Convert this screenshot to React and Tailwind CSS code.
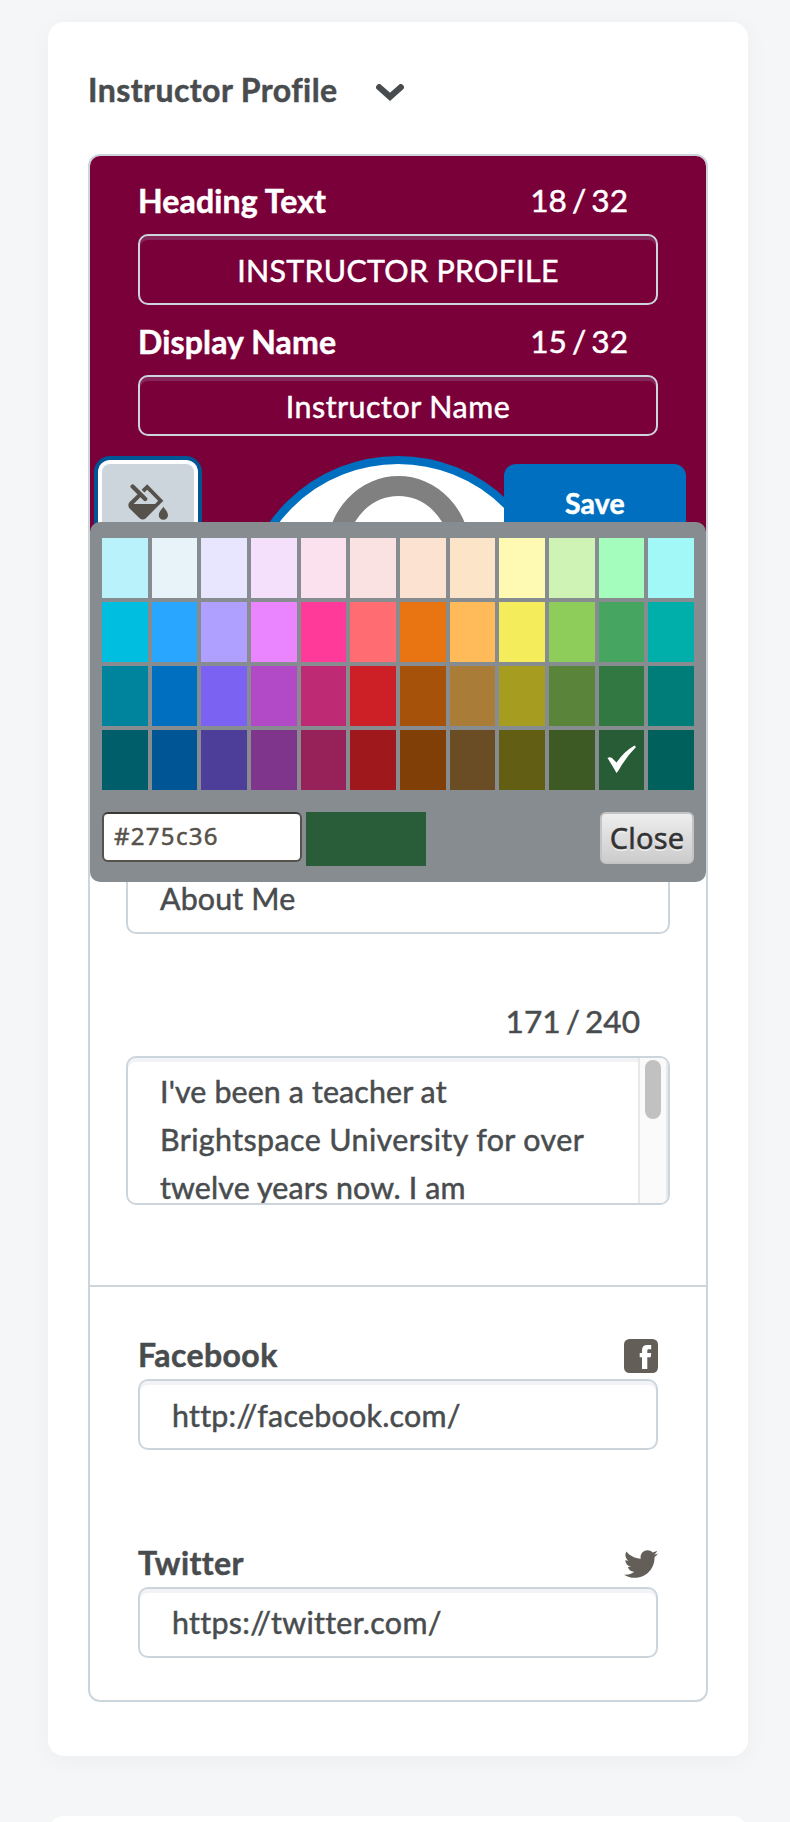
import { FaTwitter } from 'react-icons/fa';

const SWATCHES = [
  '#baf2fc', '#e8f3f9', '#e8e5ff', '#f4e0fa', '#fbe0ee', '#fae2e3', '#fce2d0', '#fce4c8', '#fffab3', '#cff3b4', '#a5fdbd', '#a1f8f6',
  '#00bedf', '#29a6ff', '#af9fff', '#eb85ff', '#ff3a99', '#ff6c72', '#e87511', '#ffba59', '#f4ec5b', '#8ecd5a', '#46a661', '#00aeaa',
  '#00839c', '#006fbf', '#7b62f2', '#b24ac7', '#be2a73', '#cd2026', '#a6520b', '#a97d38', '#a59c20', '#59843a', '#317843', '#007d78',
  '#005d6a', '#005694', '#4d3f99', '#7e358b', '#972159', '#9f181c', '#813f08', '#6a4c25', '#625f14', '#3d5a25', '#275c36', '#00605c',
];

const SELECTED = '#275c36';

function Field({ children, className = '' }) {
  return (
    <div
      className={`flex items-center whitespace-nowrap rounded-[10px] border-2 border-[#cdd5dc] text-[30.4px] ${className}`}
    >
      {children}
    </div>
  );
}

function Label({ text, children, className = '' }) {
  return (
    <div className={`flex h-10 items-center justify-between text-[32px] ${className}`}>
      <span className="font-bold">{text}</span>
      {children}
    </div>
  );
}

function Counter({ used, max }) {
  return (
    <span className="mr-[30px] text-[31.6px] tracking-normal [word-spacing:-3px]">
      {used} / {max}
    </span>
  );
}

function BucketIcon() {
  return (
    <svg viewBox="0 0 121 108" className="h-9 w-10" fill="#56524b">
      <path
        fillRule="evenodd"
        d="M58 0L107 50L54 103Q45 111 35 103L5 74Q-3 63 5 54L33 27L41 36L17 60L82 60L91 50L58 17L50 25L41 17Z"
      />
      <path d="M14 7L52 45" stroke="#56524b" strokeWidth="13" strokeLinecap="round" />
      <path d="M107 68C113 77 121 85 121 94A14 14 0 0 1 93 94C93 85 101 77 107 68Z" />
    </svg>
  );
}

function FacebookIcon() {
  return (
    <svg viewBox="0 0 34 34" className="mt-0.5 size-[34px]">
      <rect width="34" height="34" rx="5.5" fill="#635e57" />
      <path
        fill="#fff"
        d="M18 30V18.3h-2.3v-4.2H18v-2.6C18 7.800 19.900 6 23.200 6h4v4.200h-2.300c-1.300 0-1.600.6-1.600 1.700v2.200h3.900l-.5 4.200h-3.400V30z"
      />
    </svg>
  );
}

function ColorPicker() {
  return (
    <div className="absolute left-0 top-[366px] h-[360px] w-[616px] rounded-[10px] bg-[#868c8f] px-3 pt-4">
      <div className="grid grid-cols-12 gap-1">
        {SWATCHES.map((color) => (
          <div key={color} className="h-[60px] pl-2 pt-[15px]" style={{ backgroundColor: color }}>
            {color === SELECTED && (
              <svg viewBox="0 0 30 30" className="size-[30px]" fill="#fff">
                <path d="M0.500 13Q2.500 11.500 5 13L9.500 17.500Q17 6.500 27.500 0.500L29 2Q19 12 11.500 25.500L9.500 28Q5 20 0.500 13Z" />
              </svg>
            )}
          </div>
        ))}
      </div>
      <div className="mt-[22px] flex items-start">
        <div className="flex h-[50px] w-[200px] items-center rounded-md border-2 border-[#56524b] border-t-[#3a3835] bg-white pb-0.5 pl-[10px] font-['Noto_Sans',sans-serif] text-[24px] tracking-[1.3px] text-[#565149]">
          {SELECTED}
        </div>
        <div className="ml-1 h-[54px] w-[120px] bg-[#295c38]" />
        <button className="ml-auto flex h-[52px] w-[94px] items-center justify-center rounded-md border-2 border-[#c4c4c4] bg-linear-to-b from-[#eeeeee] to-[#cccccc] pb-px font-['Noto_Sans',sans-serif] text-[29px] tracking-[0.2px] text-[#333] [text-shadow:0_2px_0_#eee]">
          Close
        </button>
      </div>
    </div>
  );
}

function App() {
  return (
    <div className="h-[1822px] overflow-hidden bg-[#f5f6f8] pl-12 pr-[42px] pt-[22px] font-[Lato,sans-serif] text-[#494c4e] [-webkit-text-stroke:0.5px]">
      <div className="h-[1734px] rounded-2xl bg-white px-10 shadow-[0_4px_24px_rgba(0,0,0,0.04)]">
        <div className="flex h-[132px] items-center pt-1">
          <h2 className="text-[32px] font-bold tracking-[0.45px]">Instructor Profile</h2>
          <svg
            viewBox="0 0 28 17"
            className="ml-[38px] mt-1 h-[17px] w-7"
            fill="none"
            stroke="#494c4e"
            strokeWidth="6.2"
            strokeLinecap="round"
          >
            <path d="M3.200 3.200L14 12.800L24.800 3.200" />
          </svg>
        </div>

        <div className="relative h-[1548px] rounded-xl border-2 border-[#cdd5dc]">
          <div className="h-[640px] overflow-hidden rounded-t-[10px] bg-[#7a0039] text-white">
            <div className="px-12 pt-[25px]">
              <Label text="Heading Text" className="tracking-[0.15px]">
                <Counter used={18} max={32} />
              </Label>
              <Field className="mt-[13px] h-[71px] justify-center pt-[3px] tracking-[0.3px] shadow-[inset_0_4px_0_#87265a]">
                INSTRUCTOR PROFILE
              </Field>
              <Label text="Display Name" className="mt-[17px] tracking-[0.15px]">
                <Counter used={15} max={32} />
              </Label>
              <Field className="mt-[13px] h-[61px] justify-center pt-[3px] tracking-[0.5px] shadow-[inset_0_4px_0_#87265a]">
                Instructor Name
              </Field>
            </div>
            <div className="mt-5 flex items-start">
              <div className="ml-1 flex h-[108px] w-[108px] shrink-0 rounded-2xl bg-[#005694] p-1">
                <div className="flex flex-1 rounded-xl bg-white p-1">
                  <div className="flex flex-1 justify-center rounded-lg bg-[#cdd5dc] pt-5">
                    <BucketIcon />
                  </div>
                </div>
              </div>
              <svg viewBox="0 0 316 316" className="ml-[38px] size-[316px] shrink-0">
                <circle cx="158" cy="158" r="154" fill="#fff" stroke="#006fbf" strokeWidth="8" />
                <ellipse cx="158.500" cy="96" rx="61.500" ry="66" fill="none" stroke="#808080" strokeWidth="20" />
              </svg>
              <button className="relative -ml-[52px] mt-2 flex h-[84px] w-[182px] shrink-0 justify-center rounded-xl bg-[#006fbf] pt-[18px] text-[28.4px] leading-[42px] font-bold tracking-[0.2px]">
                Save
              </button>
            </div>
          </div>

          <div className="px-9 pt-[67px]">
            <Field className="h-[71px] px-8 pt-px tracking-[0.15px]">About Me</Field>
            <div className="mt-[68px] flex h-10 items-center justify-end">
              <Counter used={171} max={240} />
            </div>
            <div className="mt-[14px] flex h-[149px] overflow-hidden rounded-[10px] border-2 border-[#cdd5dc] shadow-[inset_0_4px_0_#f1f3f7]">
              <p className="flex-1 pl-8 pt-[9px] text-[30.4px] leading-[48px] tracking-[0.12px] whitespace-nowrap">
                I've been a teacher at
                <br />
                <span className="tracking-[0.4px]">Brightspace University for over</span>
                <br />
                twelve years now. I am
              </p>
              <div className="w-[30px] border-x-2 border-[#e8e8e8] bg-[#fafafa] px-[5px] pt-0.5">
                <div className="h-[59px] w-4 rounded-full bg-[#c1c1c1]" />
              </div>
            </div>
          </div>

          <div className="mt-20 border-t-2 border-[#cdd5dc] px-12 pt-12">
            <Label text="Facebook" className="tracking-[0.4px]">
              <FacebookIcon />
            </Label>
            <Field className="mt-1 h-[71px] px-8 pt-[3px] tracking-[0.25px] shadow-[inset_0_4px_0_#f1f3f7]">http://facebook.com/</Field>
            <Label text="Twitter" className="mt-[93px] tracking-[0.4px]">
              <FaTwitter className="mt-0.5 size-[34px] text-[#635e57]" />
            </Label>
            <Field className="mt-1 h-[71px] px-8 pt-px tracking-[0.3px] shadow-[inset_0_4px_0_#f1f3f7]">https://twitter.com/</Field>
          </div>

          <ColorPicker />
        </div>
      </div>
      <div className="mt-[60px] h-20 rounded-2xl bg-white" />
    </div>
  );
}

export default App;
